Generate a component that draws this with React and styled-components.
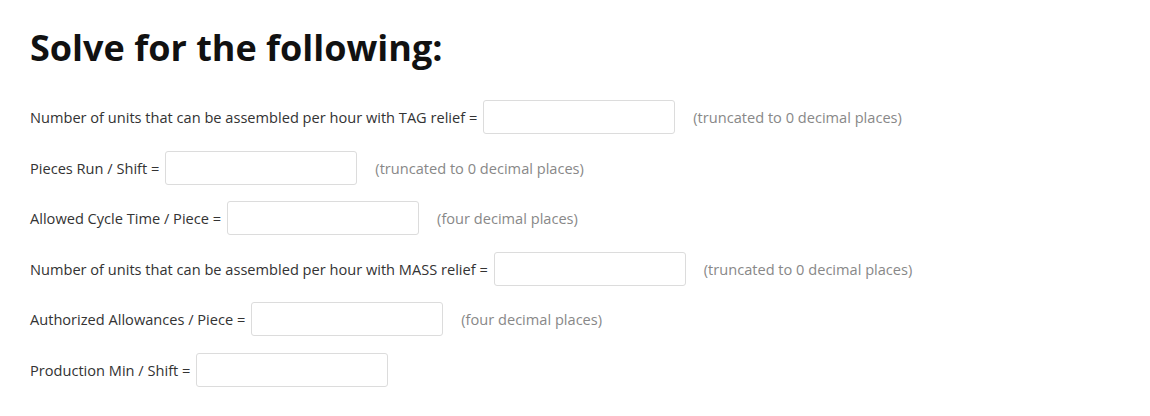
import React from "react";
import styled, { createGlobalStyle } from "styled-components";

const GlobalStyle = createGlobalStyle`
  body {
    margin: 0;
    background: #ffffff;
    font-family: "Open Sans", "Liberation Sans", sans-serif;
  }
`;

const Page = styled.div`
  padding: 24px 30px 0 30px;
`;

const Title = styled.h1`
  margin: 0 0 28px 0;
  font-size: 36px;
  font-weight: 700;
  color: #111111;
  line-height: 48px;
`;

const Form = styled.div`
  display: flex;
  flex-direction: column;
  gap: 16.5px;
`;

const Row = styled.div`
  display: flex;
  align-items: center;
  height: 34px;
`;

const Label = styled.label`
  font-size: 14.6px;
  color: #333333;
  margin-right: 6px;
`;

const Field = styled.input`
  width: 192px;
  height: 34px;
  box-sizing: border-box;
  border: 1px solid #dcdcdc;
  border-radius: 3px;
  padding: 0 8px;
  font-family: inherit;
  font-size: 14px;
  outline: none;
`;

const Hint = styled.span`
  margin-left: 18px;
  font-size: 14.6px;
  color: #888888;
`;

const rows = [
  ["Number of units that can be assembled per hour with TAG relief =", "(truncated to 0 decimal places)"],
  ["Pieces Run / Shift =", "(truncated to 0 decimal places)"],
  ["Allowed Cycle Time / Piece =", "(four decimal places)"],
  ["Number of units that can be assembled per hour with MASS relief =", "(truncated to 0 decimal places)"],
  ["Authorized Allowances / Piece =", "(four decimal places)"],
  ["Production Min / Shift =", null],
];

export default function App() {
  return (
    <>
      <GlobalStyle />
      <Page>
        <Title>Solve for the following:</Title>
        <Form>
          {rows.map(([label, hint]) => (
            <Row key={label}>
              <Label>{label}</Label>
              <Field type="text" />
              {hint && <Hint>{hint}</Hint>}
            </Row>
          ))}
        </Form>
      </Page>
    </>
  );
}
